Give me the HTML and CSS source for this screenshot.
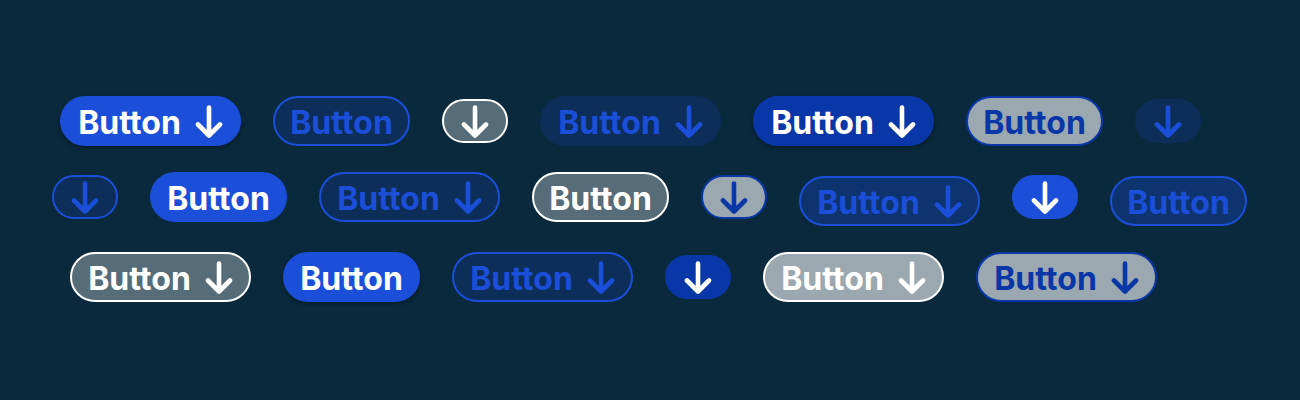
FILE: index.html
```html
<!DOCTYPE html>
<html>
<head>
<meta charset="utf-8">
<link rel="stylesheet" href="styles.css">
</head>
<body>
<svg width="0" height="0" class="defs">
  <symbol id="arrow" viewBox="0 0 28 33">
    <path d="M14 2.5V30.5M3 19.5L14 30.5L25 19.5" fill="none" stroke="currentColor" stroke-width="4.6" stroke-linecap="round" stroke-linejoin="round"/>
  </symbol>
</svg>
<main class="page">
  <div class="row row1">
    <button class="btn wide filled shadow"><span class="lbl">Button</span><svg class="ic"><use href="#arrow"/></svg></button>
    <button class="btn text outline"><span class="lbl">Button</span></button>
    <button class="btn icon grey-dark white-border"><svg class="ic"><use href="#arrow"/></svg></button>
    <button class="btn wide tonal"><span class="lbl">Button</span><svg class="ic"><use href="#arrow"/></svg></button>
    <button class="btn wide dark shadow"><span class="lbl">Button</span><svg class="ic"><use href="#arrow"/></svg></button>
    <button class="btn text grey-light blue-border"><span class="lbl">Button</span></button>
    <button class="btn icon tonal"><svg class="ic"><use href="#arrow"/></svg></button>
  </div>
  <div class="row row2">
    <button class="btn icon outline"><svg class="ic"><use href="#arrow"/></svg></button>
    <button class="btn text filled"><span class="lbl">Button</span></button>
    <button class="btn wide outline"><span class="lbl">Button</span><svg class="ic"><use href="#arrow"/></svg></button>
    <button class="btn text grey-dark white-border"><span class="lbl">Button</span></button>
    <button class="btn icon grey-light blue-border"><svg class="ic"><use href="#arrow"/></svg></button>
    <button class="btn wide outline bright low"><span class="lbl">Button</span><svg class="ic"><use href="#arrow"/></svg></button>
    <button class="btn icon filled"><svg class="ic"><use href="#arrow"/></svg></button>
    <button class="btn text outline bright low"><span class="lbl">Button</span></button>
  </div>
  <div class="row row3">
    <button class="btn wide grey-dark white-border"><span class="lbl">Button</span><svg class="ic"><use href="#arrow"/></svg></button>
    <button class="btn text filled shadow"><span class="lbl">Button</span></button>
    <button class="btn wide outline"><span class="lbl">Button</span><svg class="ic"><use href="#arrow"/></svg></button>
    <button class="btn icon dark"><svg class="ic"><use href="#arrow"/></svg></button>
    <button class="btn wide grey-light white-border"><span class="lbl">Button</span><svg class="ic"><use href="#arrow"/></svg></button>
    <button class="btn wide grey-light blue-border"><span class="lbl">Button</span><svg class="ic"><use href="#arrow"/></svg></button>
  </div>
</main>
</body>
</html>
```
FILE: styles.css
```css
html, body {
  margin: 0;
  padding: 0;
  background: #0a293d;
  width: 1300px;
  height: 400px;
  overflow: hidden;
}
.defs { position: absolute; }
.page {
  padding-top: 96px;
  display: flex;
  flex-direction: column;
  gap: 26px;
}
.row {
  display: flex;
  gap: 32px;
  align-items: flex-start;
}
.row1 { padding-left: 60px; }
.row2 { padding-left: 52px; }
.row3 { padding-left: 70px; }

.btn {
  box-sizing: border-box;
  display: inline-flex;
  align-items: center;
  justify-content: center;
  gap: 14px;
  height: 50px;
  padding: 0;
  border: 2px solid transparent;
  border-radius: 25px;
  font-family: Inter, "Noto Sans", sans-serif;
  font-weight: 700;
  font-size: 32px;
  line-height: 1;
  color: #ffffff;
  background: transparent;
  white-space: nowrap;
}
.lbl {
  display: block;
  padding-top: 3px;
}
.wide { width: 181px; }
.text { width: 137px; }
.icon {
  width: 66px;
  height: 44px;
  margin-top: 3px;
  border-radius: 22px;
}
.low { margin-top: 4px; }
.ic {
  width: 28px;
  height: 33px;
  flex: none;
}

.filled { background: #1b4fd9; border-color: #1b4fd9; }
.dark { background: #0a37a8; border-color: #0a37a8; }
.shadow { box-shadow: 0 2px 4px rgba(0, 0, 0, 0.35); }
.outline { background: #0c2e58; border-color: #1b4fd9; color: #1b4fd9; }
.outline.bright { background: #0e3470; }
.tonal { background: #0c2e58; border-color: #0c2e58; color: #1b4fd9; }
.grey-dark { background: #566c78; color: #ffffff; }
.grey-light { background: #9ba8b0; color: #ffffff; }
.white-border { border-color: #ffffff; }
.blue-border { border-color: #0a37a8; color: #0a37a8; }
```
